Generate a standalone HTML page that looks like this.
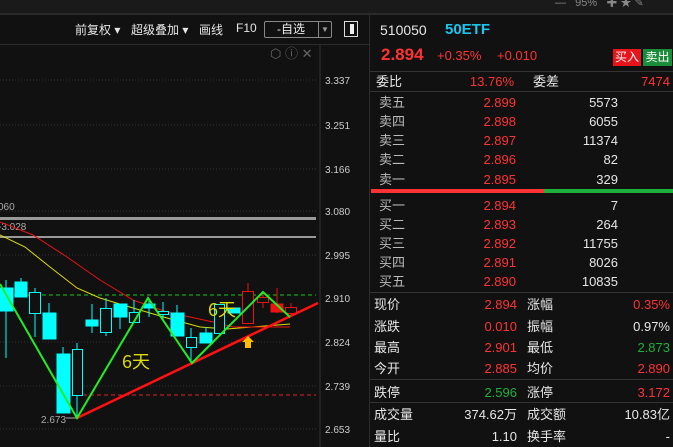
<!DOCTYPE html><html><head><meta charset="utf-8"><style>
*{margin:0;padding:0;box-sizing:border-box}
body{width:673px;height:447px;background:#111;overflow:hidden;position:relative;font-family:"Liberation Sans","Noto Sans CJK SC",sans-serif;color:#ddd}
.a{position:absolute;white-space:nowrap}
.r{color:#f33}.g{color:#1db03c}.w{color:#e6e6e6}.l{color:#bbb}
.row{position:absolute;left:370px;width:303px;height:19px;font-size:13px;line-height:19px}
.row span{position:absolute}
</style></head><body>
<div class="a" style="left:0;top:0;width:673px;height:13px;background:#1a1a1a"></div>
<div class="a" style="left:0;top:13px;width:673px;height:2px;background:#2a2a2a"></div>
<div class="a" style="left:555px;top:-6px;font-size:11px;color:#888">—&nbsp;&nbsp; 95% &nbsp; ✚ ★ ✎</div>
<div class="a" style="left:0;top:44px;width:370px;height:1px;background:#2c2c2c"></div>
<div class="a" style="left:369px;top:14px;width:1px;height:433px;background:#2c2c2c"></div>
<div class="a w" style="left:75px;top:21px;font-size:12px">前复权 ▾</div>
<div class="a w" style="left:131px;top:21px;font-size:12px">超级叠加 ▾</div>
<div class="a w" style="left:199px;top:21px;font-size:12px">画线</div>
<div class="a w" style="left:236px;top:21px;font-size:12px">F10</div>
<div class="a" style="left:264px;top:21px;width:68px;height:17px;border:1px solid #888;border-radius:2px;font-size:12px;line-height:15px;color:#eee;padding-left:12px">-自选<span style="position:absolute;left:53px;top:0;width:1px;height:15px;background:#888"></span><span style="position:absolute;left:56px;top:0;font-size:8px;color:#999">▼</span></div>
<div class="a" style="left:344px;top:21px;width:14px;height:16px;border:1px solid #ddd"><div style="margin:2px 0 0 5px;width:4px;height:10px;background:#eee"></div></div>
<div class="a" style="left:270px;top:43px;font-size:13px;color:#666">⬡ ⓘ ✕</div>
<svg class="a" style="left:0;top:45px" width="370" height="402">
<g transform="translate(0,-45)">
<line x1="320" y1="45" x2="320" y2="447" stroke="#333"/>
<g stroke="#333" stroke-dasharray="1,2">
<line x1="0" y1="80" x2="316" y2="80"/><line x1="0" y1="125" x2="316" y2="125"/><line x1="0" y1="169" x2="316" y2="169"/><line x1="0" y1="211" x2="316" y2="211"/><line x1="0" y1="255" x2="316" y2="255"/><line x1="0" y1="342" x2="316" y2="342"/><line x1="0" y1="386" x2="316" y2="386"/><line x1="0" y1="429" x2="316" y2="429"/></g>
<g font-size="10" fill="#ccc" font-family="Liberation Sans"><text x="325" y="84">3.337</text><text x="325" y="129">3.251</text><text x="325" y="173">3.166</text><text x="325" y="215">3.080</text><text x="325" y="259">2.995</text><text x="325" y="302">2.910</text><text x="325" y="346">2.824</text><text x="325" y="390">2.739</text><text x="325" y="433">2.653</text>
<text x="-2" y="210" fill="#aaa">060</text><text x="-2" y="230" fill="#aaa">-3.028</text><text x="41" y="423" fill="#aaa">2.673</text></g>
<rect x="0" y="217" width="316" height="3" fill="#999"/><rect x="0" y="236" width="316" height="2" fill="#999"/>
<line x1="0" y1="295" x2="316" y2="295" stroke="#1c1" stroke-dasharray="4,3"/>
<line x1="83" y1="395" x2="316" y2="395" stroke="#d22" stroke-dasharray="4,3"/>
<line x1="66" y1="418" x2="77" y2="418" stroke="#aaa"/>
<polyline fill="none" stroke="#dd0" points="0,235 25,247 50,267 77,288 100,298 133,308 167,318 200,327 227,329 290,324"/>
<polyline fill="none" stroke="#e11" points="0,222 33,235 67,257 100,280 133,300 167,312 213,322 233,327 290,327"/>
<g stroke="#0ff" fill="#0ff">
<line x1="6" y1="280" x2="6" y2="358"/><rect x="0" y="288" width="13" height="23"/>
<line x1="21" y1="278" x2="21" y2="297"/><rect x="15" y="282" width="12" height="15"/>
<line x1="35" y1="288" x2="35" y2="337"/><rect x="29.5" y="292.5" width="11" height="21" fill="#111"/>
<line x1="49" y1="303" x2="49" y2="339"/><rect x="43" y="313" width="13" height="26"/>
<line x1="63" y1="347" x2="63" y2="413"/><rect x="57" y="354" width="13" height="59"/>
<line x1="77" y1="343" x2="77" y2="418"/><rect x="72.5" y="349.5" width="10" height="46" fill="#111"/>
<line x1="92" y1="304" x2="92" y2="333"/><rect x="86" y="320" width="12" height="6"/>
<line x1="106" y1="298" x2="106" y2="336"/><rect x="100.5" y="308.5" width="11" height="24" fill="#111"/>
<line x1="120" y1="304" x2="120" y2="329"/><rect x="114" y="304" width="13" height="13"/>
<line x1="134" y1="300" x2="134" y2="322"/><rect x="129.5" y="312.5" width="10" height="10" fill="#111"/>
<line x1="149" y1="298" x2="149" y2="317"/><rect x="144" y="304" width="11" height="4"/>
<line x1="163" y1="302" x2="163" y2="320"/><rect x="158.5" y="311.5" width="10" height="3" fill="#111"/>
<line x1="177" y1="305" x2="177" y2="336"/><rect x="171" y="313" width="13" height="23"/>
<line x1="191" y1="328" x2="191" y2="363"/><rect x="186.5" y="337.5" width="10" height="10" fill="#111"/>
<line x1="206" y1="327" x2="206" y2="343"/><rect x="200" y="333" width="12" height="10"/>
<rect x="214.5" y="304.5" width="10" height="29" fill="#111"/>
<rect x="228" y="308" width="12" height="5"/></g>
<g stroke="#e11" fill="#111">
<line x1="248" y1="283" x2="248" y2="324"/><rect x="242.5" y="291.5" width="11" height="32"/>
<line x1="263" y1="292" x2="263" y2="308"/><rect x="257.5" y="297.5" width="11" height="5"/>
<line x1="277" y1="288" x2="277" y2="313"/><rect x="271" y="304" width="12" height="8" fill="#e11"/>
<line x1="291" y1="303" x2="291" y2="316"/><rect x="285.5" y="307.5" width="11" height="6"/></g>
<line x1="77" y1="418" x2="318" y2="303" stroke="#f11" stroke-width="2.5"/>
<polyline fill="none" stroke="#2e2" stroke-width="2" points="0,284 77,418 148,298 192,363 263,292 290,317"/>
<text x="122" y="368" font-size="18" fill="#dd0" font-family="Noto Sans CJK SC">6天</text>
<text x="208" y="316" font-size="18" fill="#dd0" font-family="Noto Sans CJK SC">6天</text>
<path d="M248,336 l-6,6 h3 v6 h6 v-6 h3z" fill="#fb0"/>
</g></svg>
<div class="a w" style="left:380px;top:22px;font-size:14px">510050</div>
<div class="a" style="left:445px;top:21px;font-size:15px;font-weight:bold;color:#1ac6ef">50ETF</div>
<div class="a r" style="left:381px;top:45px;font-size:17px;font-weight:bold">2.894</div>
<div class="a r" style="left:437px;top:48px;font-size:13px">+0.35%</div>
<div class="a r" style="left:497px;top:48px;font-size:13px">+0.010</div>
<div class="a" style="left:613px;top:49px;width:28px;height:17px;background:#e8141b;color:#fff;font-size:12px;text-align:center;line-height:17px">买入</div>
<div class="a" style="left:643px;top:49px;width:29px;height:17px;background:#1b8c3a;color:#fff;font-size:12px;text-align:center;line-height:17px">卖出</div>
<div class="a" style="left:370px;top:71px;width:303px;height:1px;background:#333"></div>
<div class="a" style="left:370px;top:91px;width:303px;height:1px;background:#333"></div>
<div class="row" style="top:72px"><span class="w" style="left:6px">委比</span><span class="r" style="right:159px">13.76%</span><span class="w" style="left:163px">委差</span><span class="r" style="right:3px">7474</span></div>
<div class="row" style="top:93px"><span class="l" style="left:9px">卖五</span><span class="r" style="right:157px">2.899</span><span class="w" style="right:55px">5573</span></div>
<div class="row" style="top:112px"><span class="l" style="left:9px">卖四</span><span class="r" style="right:157px">2.898</span><span class="w" style="right:55px">6055</span></div>
<div class="row" style="top:131px"><span class="l" style="left:9px">卖三</span><span class="r" style="right:157px">2.897</span><span class="w" style="right:55px">11374</span></div>
<div class="row" style="top:150px"><span class="l" style="left:9px">卖二</span><span class="r" style="right:157px">2.896</span><span class="w" style="right:55px">82</span></div>
<div class="row" style="top:170px"><span class="l" style="left:9px">卖一</span><span class="r" style="right:157px">2.895</span><span class="w" style="right:55px">329</span></div>
<div class="a" style="left:371px;top:189px;width:173px;height:4px;background:#f33"></div>
<div class="a" style="left:544px;top:189px;width:129px;height:4px;background:#1db03c"></div>
<div class="row" style="top:196px"><span class="l" style="left:9px">买一</span><span class="r" style="right:157px">2.894</span><span class="w" style="right:55px">7</span></div>
<div class="row" style="top:215px"><span class="l" style="left:9px">买二</span><span class="r" style="right:157px">2.893</span><span class="w" style="right:55px">264</span></div>
<div class="row" style="top:234px"><span class="l" style="left:9px">买三</span><span class="r" style="right:157px">2.892</span><span class="w" style="right:55px">11755</span></div>
<div class="row" style="top:253px"><span class="l" style="left:9px">买四</span><span class="r" style="right:157px">2.891</span><span class="w" style="right:55px">8026</span></div>
<div class="row" style="top:272px"><span class="l" style="left:9px">买五</span><span class="r" style="right:157px">2.890</span><span class="w" style="right:55px">10835</span></div>
<div class="a" style="left:370px;top:292px;width:303px;height:1px;background:#333"></div>
<div class="row" style="top:295px"><span class="w" style="left:4px">现价</span><span class="r" style="right:156px">2.894</span><span class="w" style="left:157px">涨幅</span><span class="r" style="right:3px">0.35%</span></div>
<div class="row" style="top:317px"><span class="w" style="left:4px">涨跌</span><span class="r" style="right:156px">0.010</span><span class="w" style="left:157px">振幅</span><span class="w" style="right:3px">0.97%</span></div>
<div class="row" style="top:338px"><span class="w" style="left:4px">最高</span><span class="r" style="right:156px">2.901</span><span class="w" style="left:157px">最低</span><span class="g" style="right:3px">2.873</span></div>
<div class="row" style="top:359px"><span class="w" style="left:4px">今开</span><span class="r" style="right:156px">2.885</span><span class="w" style="left:157px">均价</span><span class="r" style="right:3px">2.890</span></div>
<div class="a" style="left:370px;top:379px;width:303px;height:1px;background:#333"></div>
<div class="row" style="top:383px"><span class="w" style="left:4px">跌停</span><span class="g" style="right:156px">2.596</span><span class="w" style="left:157px">涨停</span><span class="r" style="right:3px">3.172</span></div>
<div class="a" style="left:370px;top:402px;width:303px;height:1px;background:#333"></div>
<div class="row" style="top:405px"><span class="w" style="left:4px">成交量</span><span class="w" style="right:156px">374.62万</span><span class="w" style="left:157px">成交额</span><span class="w" style="right:3px">10.83亿</span></div>
<div class="row" style="top:427px"><span class="w" style="left:4px">量比</span><span class="w" style="right:156px">1.10</span><span class="w" style="left:157px">换手率</span><span class="w" style="right:3px">-</span></div>
</body></html>
